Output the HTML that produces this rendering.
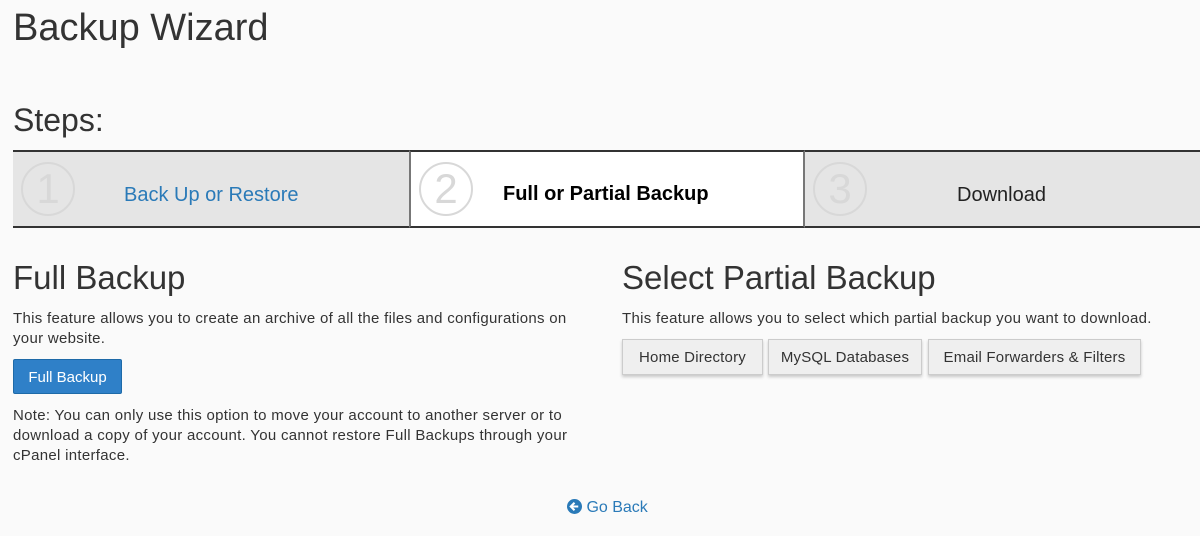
<!DOCTYPE html>
<html><head><style>
body{margin:0;background:#fafafa;font-family:"Liberation Sans",sans-serif;color:#333;width:1200px;height:536px;overflow:hidden;position:relative}
.a{position:absolute;white-space:nowrap}
.seg{position:absolute;top:150px;height:74px;border-top:2px solid #333;border-bottom:2px solid #333;background:#e5e5e5}
.num{position:absolute;left:8px;top:10px;width:54px;height:54px;border:2px solid #d8d8d8;border-radius:50%;box-sizing:border-box;color:#d8d8d8;font-size:42px;line-height:50px;text-align:center;font-weight:300}
.lab{position:absolute;top:32px;font-size:20px}
.btn{position:absolute;top:339px;height:36px;background:#efefef;border:1px solid #ccc;box-shadow:0 2px 3px rgba(0,0,0,.2);font-size:15px;line-height:36px;text-align:center;color:#333;box-sizing:border-box;letter-spacing:.2px}
.t{font-size:15px;line-height:20px;letter-spacing:.3px}
</style></head><body>
<div class="a" style="left:13px;top:7px;font-size:38px;color:#333">Backup Wizard</div>
<div class="a" style="left:13px;top:102px;font-size:32px">Steps:</div>
<div class="seg" style="left:13px;width:396px"><div class="num">1</div><div class="lab" style="left:111px;color:#2a7ab8">Back Up or Restore</div></div>
<div class="seg" style="left:409px;width:396px;background:#fff;border-left:2px solid #777;border-right:2px solid #777;box-sizing:border-box;height:78px"><div class="num">2</div><div class="lab" style="left:92px;color:#000;font-weight:bold;top:31px">Full or Partial Backup</div></div>
<div class="seg" style="left:805px;width:395px"><div class="num">3</div><div class="lab" style="left:152px;color:#222">Download</div></div>
<div class="a" style="left:13px;top:259px;font-size:33px">Full Backup</div>
<div class="a t" style="left:13px;top:309px;white-space:normal;width:575px">This feature allows you to create an archive of all the files and configurations on your website.</div>
<div class="a" style="left:13px;top:359px;width:109px;height:35px;background:#2f80c8;border:1px solid #1e6aa8;border-radius:2px;color:#fff;font-size:15px;line-height:35px;text-align:center;box-sizing:border-box">Full Backup</div>
<div class="a t" style="left:13px;top:406px;white-space:normal;width:580px">Note: You can only use this option to move your account to another server or to download a copy of your account. You cannot restore Full Backups through your cPanel interface.</div>
<div class="a" style="left:622px;top:259px;font-size:33px">Select Partial Backup</div>
<div class="a t" style="left:622px;top:309px">This feature allows you to select which partial backup you want to download.</div>
<div class="btn" style="left:622px;width:141px">Home Directory</div>
<div class="btn" style="left:768px;width:154px">MySQL Databases</div>
<div class="btn" style="left:928px;width:213px">Email Forwarders &amp; Filters</div>
<div class="a" style="left:567px;top:499px;font-size:16px;color:#2a7ab8"><svg width="15" height="15" viewBox="0 0 16 16" style="vertical-align:-2px"><circle cx="8" cy="8" r="8" fill="#2a7ab8"/><path d="M8 4L4 8l4 4M4 8h8" stroke="#fff" stroke-width="2.2" fill="none"/></svg> Go Back</div>
</body></html>
